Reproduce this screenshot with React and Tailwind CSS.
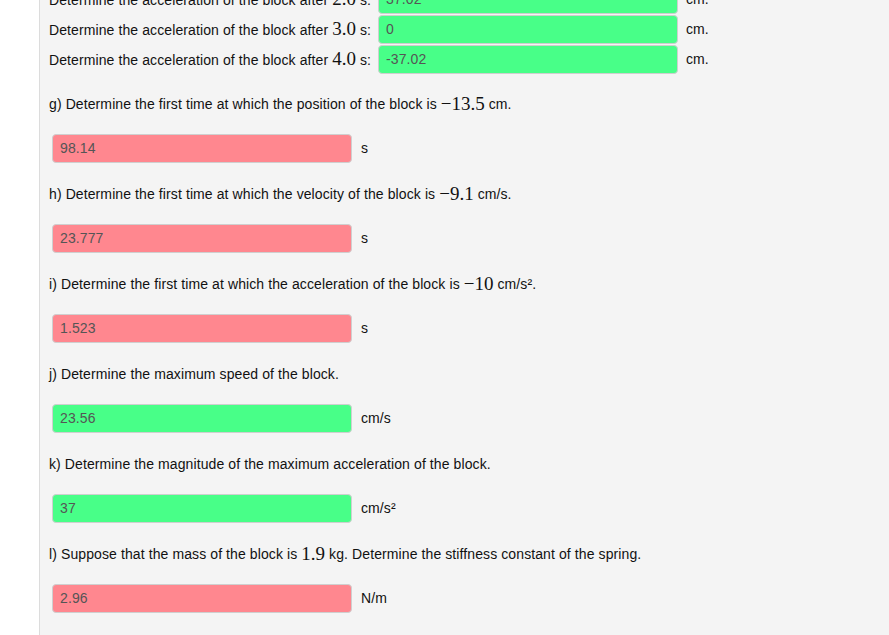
import React from 'react';

const GREEN = 'bg-[#48ff88]';
const RED = 'bg-[#ff878f]';

// 数式部分（セリフ体）
function M({ children }) {
  return (
    <span className="font-['Liberation_Serif','DejaVu_Serif',serif] text-[19px] tracking-normal">{children}</span>
  );
}

function Field({ value, ok, className = '' }) {
  return (
    <div
      className={`h-[29px] rounded-[4px] border border-[#cfcfcf] ${ok ? GREEN : RED} text-[#555] text-[14px] leading-[27px] pl-[7px] ${className}`}
    >
      {value}
    </div>
  );
}

function AccelRow({ t, value }) {
  return (
    <div className="flex items-center h-[28px]">
      <div className="w-[329px] shrink-0 whitespace-nowrap">
        Determine the acceleration of the block after <M>{t}</M> s:
      </div>
      <Field value={value} ok className="w-[300px]" />
      <span className="ml-[8px]">cm.</span>
    </div>
  );
}

function Question({ label, value, ok, unit }) {
  return (
    <div>
      <div className="mt-[21px] h-[20px] leading-[20px] flex items-center whitespace-pre">{label}</div>
      <div className="mt-[20px] flex items-center ml-[3px]">
        <Field value={value} ok={ok} className="w-[300px]" />
        <span className="ml-[9px]">{unit}</span>
      </div>
    </div>
  );
}

export default function App() {
  return (
    <div className="flex h-[635px] w-[889px] overflow-hidden font-['Liberation_Sans',Arial,sans-serif] text-[14px] tracking-[0.1px] text-[#111]">
      <div className="w-[40px] shrink-0 bg-white border-r border-[#dcdcdc]" />
      <div className="flex-1 bg-[#f4f4f4] pl-[9px]">
        <div className="mt-[-15px] flex flex-col gap-[2px]">
          <AccelRow t="2.0" value="37.02" />
          <AccelRow t="3.0" value="0" />
          <AccelRow t="4.0" value="-37.02" />
        </div>

        <Question
          label={<>g) Determine the first time at which the position of the block is <M>−13.5</M> cm.</>}
          value="98.14"
          ok={false}
          unit="s"
        />
        <Question
          label={<>h) Determine the first time at which the velocity of the block is <M>−9.1</M> cm/s.</>}
          value="23.777"
          ok={false}
          unit="s"
        />
        <Question
          label={<>i) Determine the first time at which the acceleration of the block is <M>−10</M> cm/s².</>}
          value="1.523"
          ok={false}
          unit="s"
        />
        <Question
          label="j) Determine the maximum speed of the block."
          value="23.56"
          ok
          unit="cm/s"
        />
        <Question
          label="k) Determine the magnitude of the maximum acceleration of the block."
          value="37"
          ok
          unit="cm/s²"
        />
        <Question
          label={<>l) Suppose that the mass of the block is <M>1.9</M> kg. Determine the stiffness constant of the spring.</>}
          value="2.96"
          ok={false}
          unit="N/m"
        />
      </div>
    </div>
  );
}
